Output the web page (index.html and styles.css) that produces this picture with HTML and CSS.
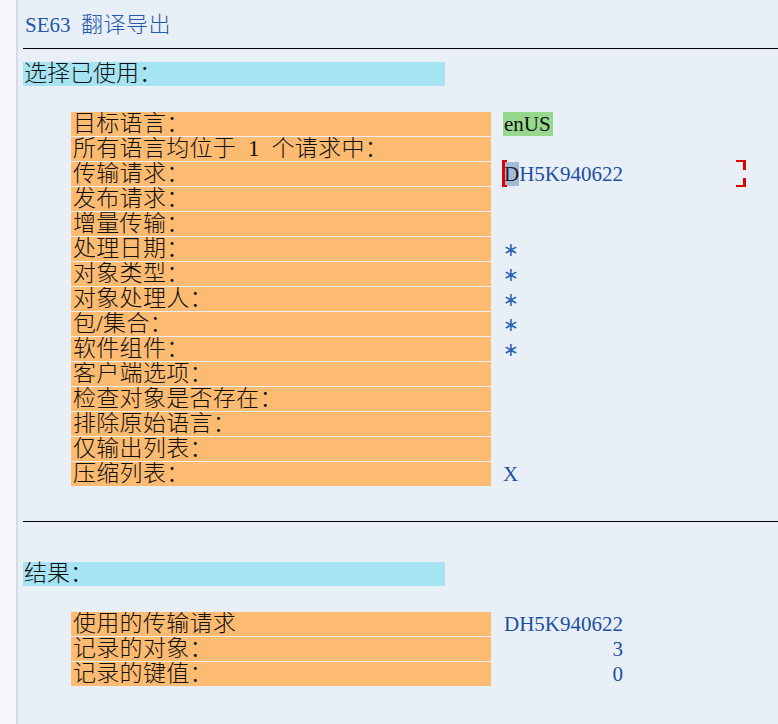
FILE: index.html
```html
<!DOCTYPE html>
<html lang="zh">
<head>
  <meta charset="UTF-8">
  <title>SE63 翻译导出</title>
  <link rel="stylesheet" href="styles.css">
</head>
<body>

  <div class="gutter"></div>

  <div class="content">
    <div class="title">SE63&ensp;<span class="cjk">翻译导出</span></div>
    <div class="rule"></div>

    <div class="section-head">选择已使用：</div>

    <div class="rows">
      <div class="row"><div class="label">目标语言：</div><div class="value"><span class="lang">enUS</span></div></div>
      <div class="row"><div class="label">所有语言均位于&ensp;1&ensp;个请求中：</div><div class="value"></div></div>
      <div class="row">
        <div class="label">传输请求：</div>
        <div class="value">
          <span class="field"><span class="cursor">D</span>H5K940622<span class="field-end"></span></span>
        </div>
      </div>
      <div class="row"><div class="label">发布请求：</div><div class="value"></div></div>
      <div class="row"><div class="label">增量传输：</div><div class="value"></div></div>
      <div class="row"><div class="label">处理日期：</div><div class="value"><span class="star">∗</span></div></div>
      <div class="row"><div class="label">对象类型：</div><div class="value"><span class="star">∗</span></div></div>
      <div class="row"><div class="label">对象处理人：</div><div class="value"><span class="star">∗</span></div></div>
      <div class="row"><div class="label">包/集合：</div><div class="value"><span class="star">∗</span></div></div>
      <div class="row"><div class="label">软件组件：</div><div class="value"><span class="star">∗</span></div></div>
      <div class="row"><div class="label">客户端选项：</div><div class="value"></div></div>
      <div class="row"><div class="label">检查对象是否存在：</div><div class="value"></div></div>
      <div class="row"><div class="label">排除原始语言：</div><div class="value"></div></div>
      <div class="row"><div class="label">仅输出列表：</div><div class="value"></div></div>
      <div class="row"><div class="label">压缩列表：</div><div class="value">X</div></div>
    </div>

    <div class="rule rule-2"></div>

    <div class="section-head section-head-2">结果：</div>

    <div class="rows">
      <div class="row"><div class="label">使用的传输请求</div><div class="value"><span class="num">DH5K940622</span></div></div>
      <div class="row"><div class="label">记录的对象：</div><div class="value"><span class="num">3</span></div></div>
      <div class="row"><div class="label">记录的键值：</div><div class="value"><span class="num">0</span></div></div>
    </div>
  </div>

</body>
</html>
```

FILE: styles.css
```css
:root {
  --bg: #e8eff7;
  --gutter: #f4f6f9;
  --edge: #d5dbe6;
  --label: #fdbb72;
  --head: #a6e4f3;
  --blue: #1c4f9f;
  --text: #111;
  --red: #e00000;
}
html, body {
  height: 100%;
}
body {
  margin: 0;
  display: flex;
  font-family: "Liberation Serif", "Noto Sans CJK SC", serif;
  font-size: 21px;
  color: var(--text);
  background: var(--bg);
}
.gutter {
  width: 16px;
  background: var(--gutter);
  border-right: 2px solid var(--edge);
  flex-shrink: 0;
}
.content {
  flex: 1;
  padding-left: 5px;
  background: var(--bg);
}
.title {
  margin-top: 13px;
  height: 24px;
  line-height: 24px;
  padding-left: 2px;
  color: #2458a8;
  white-space: nowrap;
}
.title .cjk {
  font-size: 22px;
  font-weight: 300;
  letter-spacing: 0.5px;
}
.rule {
  margin-top: 11px;
  height: 1px;
  background: #000;
}
.rule-2 {
  margin-top: 35px;
}
.section-head {
  margin-top: 13px;
  width: 422px;
  height: 24px;
  line-height: 24px;
  padding-left: 1px;
  box-sizing: border-box;
  background: var(--head);
  font-size: 23px;
  font-weight: 300;
  white-space: nowrap;
}
.section-head-2 {
  margin-top: 40px;
}
.rows {
  margin-top: 26px;
  margin-left: 48px;
  display: flex;
  flex-direction: column;
  gap: 1px;
}
.row {
  display: flex;
  height: 24px;
  line-height: 24px;
}
.label {
  width: 420px;
  padding-left: 2px;
  box-sizing: border-box;
  background: var(--label);
  font-size: 23px;
  font-weight: 300;
  letter-spacing: 0.3px;
  white-space: nowrap;
  overflow: hidden;
}
.value {
  margin-left: 12px;
  color: var(--blue);
  white-space: nowrap;
}
.lang {
  display: inline-block;
  width: 50px;
  height: 24px;
  padding-left: 1px;
  box-sizing: border-box;
  background: #96d98d;
  color: var(--text);
}
.field {
  position: relative;
  display: inline-block;
  width: 243px;
  height: 24px;
  padding-left: 1px;
  box-sizing: border-box;
}
.field::before {
  content: "";
  position: absolute;
  left: -1px; top: -2px;
  width: 2px; height: 23px;
  border-top: 2px solid var(--red);
  border-bottom: 2px solid var(--red);
  border-left: 3px solid var(--red);
}
.field::after {
  content: "";
  position: absolute;
  right: 0; top: -2px;
  width: 7px; height: 8px;
  border-top: 2px solid var(--red);
  border-right: 3px solid var(--red);
}
.field-end {
  position: absolute;
  right: 0; bottom: -1px;
  width: 7px; height: 7px;
  border-bottom: 2px solid var(--red);
  border-right: 3px solid var(--red);
}
.cursor {
  background: #a7bad4;
  color: #1a1f33;
}
.star {
  font-family: "DejaVu Sans", sans-serif;
  font-size: 19px;
  color: #2a63b5;
}
.num {
  display: inline-block;
  width: 120px;
  text-align: right;
}
```
